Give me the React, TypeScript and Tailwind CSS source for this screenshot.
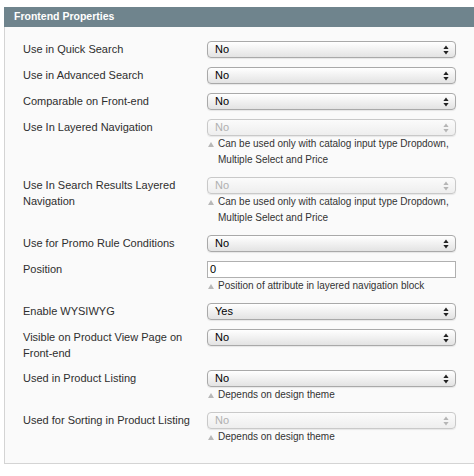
import React from "react";

type Row = {
  label: string;
  kind: "select" | "input";
  value: string;
  disabled?: boolean;
  note?: string;
};

const rows: Row[] = [
  { label: "Use in Quick Search", kind: "select", value: "No" },
  { label: "Use in Advanced Search", kind: "select", value: "No" },
  { label: "Comparable on Front-end", kind: "select", value: "No" },
  {
    label: "Use In Layered Navigation",
    kind: "select",
    value: "No",
    disabled: true,
    note: "Can be used only with catalog input type Dropdown, Multiple Select and Price",
  },
  {
    label: "Use In Search Results Layered Navigation",
    kind: "select",
    value: "No",
    disabled: true,
    note: "Can be used only with catalog input type Dropdown, Multiple Select and Price",
  },
  { label: "Use for Promo Rule Conditions", kind: "select", value: "No" },
  { label: "Position", kind: "input", value: "0", note: "Position of attribute in layered navigation block" },
  { label: "Enable WYSIWYG", kind: "select", value: "Yes" },
  { label: "Visible on Product View Page on Front-end", kind: "select", value: "No" },
  { label: "Used in Product Listing", kind: "select", value: "No", note: "Depends on design theme" },
  {
    label: "Used for Sorting in Product Listing",
    kind: "select",
    value: "No",
    disabled: true,
    note: "Depends on design theme",
  },
];

const Arrows = ({ disabled }: { disabled?: boolean }) => (
  <svg width="6" height="10" viewBox="0 0 6 10" className="shrink-0">
    <path d="M3 0.5 L5.6 4 L0.4 4 Z" fill={disabled ? "#b5b5b5" : "#222"} />
    <path d="M3 9.5 L5.6 6 L0.4 6 Z" fill={disabled ? "#b5b5b5" : "#222"} />
  </svg>
);

const FakeSelect = ({ value, disabled }: { value: string; disabled?: boolean }) => (
  <div
    className={`flex h-[17px] w-[249px] items-center justify-between rounded-[4px] border pl-[7px] pr-[6px] shadow-[0_1px_1px_rgba(0,0,0,0.08)] ${
      disabled
        ? "border-[#c9c9c9] bg-gradient-to-b from-[#fbfbfb] to-[#eeeeee] text-[#b0b0b0]"
        : "border-[#a9a9a9] bg-gradient-to-b from-[#ffffff] to-[#e3e3e3] text-black"
    }`}
  >
    <span className="text-[11px] leading-none">{value}</span>
    <Arrows disabled={disabled} />
  </div>
);

const FakeInput = ({ value }: { value: string }) => (
  <div className="flex h-[17px] w-[249px] items-center border border-[#b0b0b0] bg-white pl-[2px] text-[11px] leading-none text-black">
    {value}
  </div>
);

const Note = ({ text }: { text: string }) => (
  <div className="flex w-[249px] text-[10px] leading-[16px] text-[#333]">
    <div className="flex w-[11px] shrink-0 pl-[1px] pt-[6px]">
      <svg width="6" height="5" viewBox="0 0 6 5">
        <path d="M3 0 L6 5 L0 5 Z" fill="#b8b8b8" />
      </svg>
    </div>
    <div>{text}</div>
  </div>
);

export default function App() {
  return (
    <div className="h-[476px] w-[474px] overflow-hidden bg-white pt-[7px] font-['Liberation_Sans',Arial,sans-serif]">
      <div className="ml-[4px] w-[480px]">
        <div className="flex h-[20px] items-center bg-[#6f848d] pl-[10px] text-[10.5px] font-bold text-white">
          Frontend Properties
        </div>
        <div className="border-b border-l border-[#d4d4d4] bg-[#fafafa] pb-[14px] pl-[18px] pt-[9px]">
          {rows.map((row, i) => (
            <div key={i} className="flex pb-[4px] pt-[5px]">
              <div className="w-[184px] pr-[4px] text-[11px] leading-[16px] text-[#2e2e2e]">{row.label}</div>
              <div className="flex flex-col">
                {row.kind === "select" ? (
                  <FakeSelect value={row.value} disabled={row.disabled} />
                ) : (
                  <FakeInput value={row.value} />
                )}
                {row.note && <Note text={row.note} />}
              </div>
            </div>
          ))}
        </div>
      </div>
    </div>
  );
}
